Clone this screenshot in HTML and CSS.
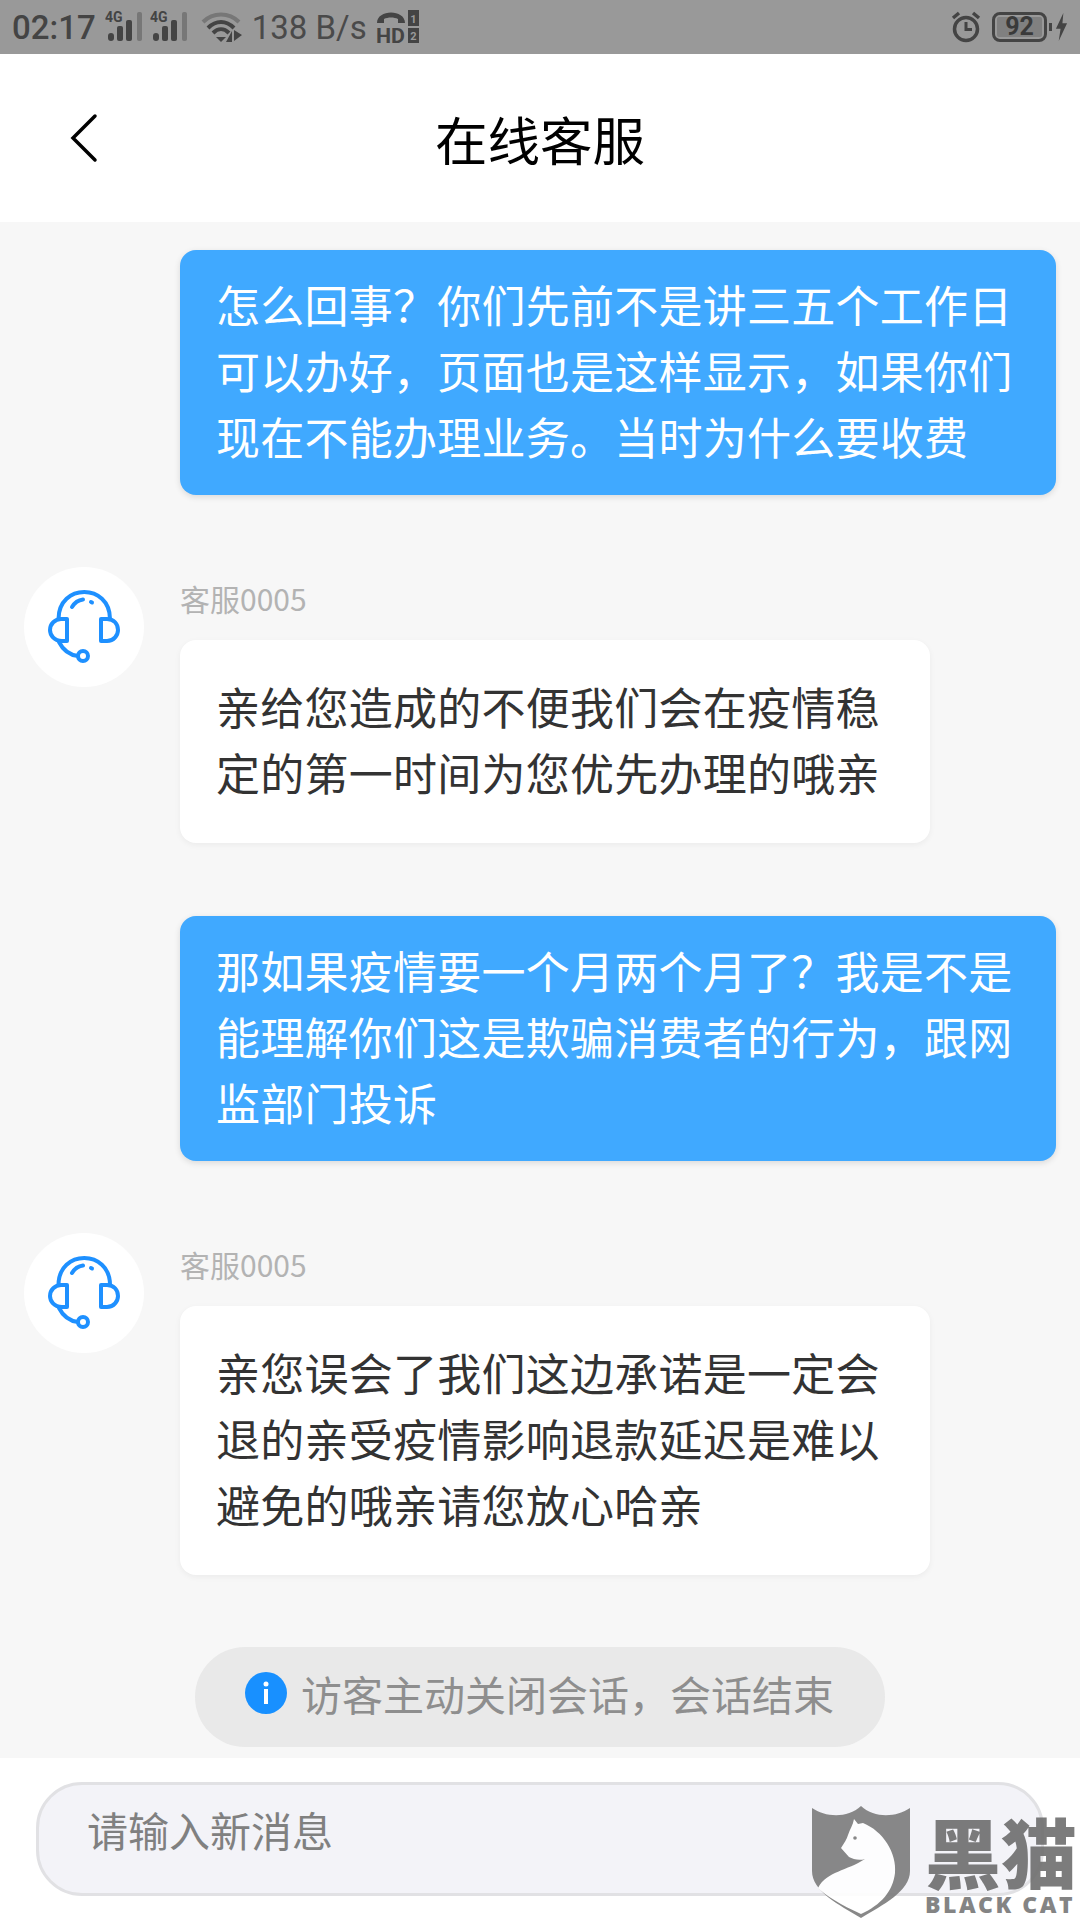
FILE: index.html
```html
<!DOCTYPE html>
<html lang="zh">
<head>
<meta charset="utf-8">
<title>在线客服</title>
<link rel="stylesheet" href="styles.css">
</head>
<body>
<div class="app">
  <div class="status">
    <div class="status-left">
      <span class="time">02:17</span>
      <svg class="ic-sig" viewBox="0 0 40 34"><text x="0" y="12" class="sig-t">4G</text><rect x="3" y="23" width="6" height="8" rx="3" fill="#444"/><rect x="12" y="16" width="6" height="15" rx="2" fill="#444"/><rect x="21" y="10" width="6" height="21" rx="2" fill="#444"/><rect x="32" y="2" width="5" height="29" rx="2" fill="#777"/></svg>
      <svg class="ic-sig" viewBox="0 0 40 34"><text x="0" y="12" class="sig-t">4G</text><rect x="3" y="23" width="6" height="8" rx="3" fill="#444"/><rect x="12" y="16" width="6" height="15" rx="2" fill="#444"/><rect x="21" y="10" width="6" height="21" rx="2" fill="#444"/><rect x="32" y="2" width="5" height="29" rx="2" fill="#777"/></svg>
      <svg class="ic-wifi" viewBox="0 0 44 34"><path d="M2 12 C12 2 28 2 38 12" fill="none" stroke="#777" stroke-width="4"/><path d="M7 18 C15 10 25 10 33 18" fill="none" stroke="#444" stroke-width="4"/><path d="M12 23 C17 18 23 18 28 23" fill="none" stroke="#444" stroke-width="4"/><path d="M15 27 L25 27 L20 32 Z" fill="#444"/><path d="M31 32 V21 L25 32 Z M33 20 V31 L41 25 Z" fill="#444"/></svg>
      <span class="speed">138 B/s</span>
      <svg class="ic-hd" viewBox="0 0 44 40"><path d="M1 13 C1 -1 29 -1 29 13 L22 13 L22 9 C18 7 12 7 8 9 L8 13 Z" fill="#444"/><text x="0" y="33" class="hd-t" textLength="29" lengthAdjust="spacingAndGlyphs">HD</text><rect x="32" y="0" width="11" height="16" fill="#444"/><rect x="32" y="18" width="11" height="15" fill="#444"/><text x="37.500" y="13" class="n-t">1</text><text x="37.500" y="30" class="n-t">2</text></svg>
    </div>
    <div class="status-right">
      <svg class="ic-alarm" viewBox="0 0 30 32"><circle cx="15" cy="18" r="11.500" fill="none" stroke="#444" stroke-width="3.500"/><path d="M15 11 V18.500 H21" fill="none" stroke="#444" stroke-width="3"/><path d="M2 7 L8 2 M28 7 L22 2" stroke="#444" stroke-width="3.500"/></svg>
      <div class="battery"><span class="batt-num">92</span></div>
      <span class="batt-cap"></span>
      <svg class="ic-bolt" viewBox="0 0 14 30"><path d="M9 0 L1 17 H6 L4 30 L13 11 H8 Z" fill="#444"/></svg>
    </div>
  </div>

  <header class="nav">
    <svg class="back" viewBox="0 0 30 50"><path d="M26 3 L4 25 L26 47" fill="none" stroke="#000" stroke-width="3.500" stroke-linecap="round"/></svg>
    <h1 class="title">在线客服</h1>
  </header>

  <main class="chat">
    <div class="bubble mine">怎么回事&#xFF1F;你们先前不是讲三五个工作日可以办好&#xFF0C;页面也是这样显示&#xFF0C;如果你们现在不能办理业务。当时为什么要收费</div>

    <div class="agent-row">
      <div class="avatar">
        <svg class="agent-ic" viewBox="0 0 72 74"><g fill="none" stroke="#1e90ff" stroke-width="4" stroke-linecap="round" stroke-linejoin="round"><path d="M10.500 29 C10.500 -7 62 -7 62 29"/><path d="M24 17 C27 12 31 10 35 9.500"/><path d="M43 12 L44 12.500"/><path d="M19 29 V51 H14 C6 51 2 45 2 40 C2 34 7 29 13 29 Z"/><path d="M53 29 V51 H59 C66 51 70 45 70 40 C70 34 66 29 59 29 Z"/><path d="M11 52 C15 60 22 65 30 66"/><circle cx="35" cy="66" r="5"/></g></svg>
      </div>
      <div class="agent-col">
        <div class="name">客服0005</div>
        <div class="bubble theirs">亲给您造成的不便我们会在疫情稳定的第一时间为您优先办理的哦亲</div>
      </div>
    </div>

    <div class="bubble mine">那如果疫情要一个月两个月了&#xFF1F;我是不是能理解你们这是欺骗消费者的行为&#xFF0C;跟网监部门投诉</div>

    <div class="agent-row">
      <div class="avatar">
        <svg class="agent-ic" viewBox="0 0 72 74"><g fill="none" stroke="#1e90ff" stroke-width="4" stroke-linecap="round" stroke-linejoin="round"><path d="M10.500 29 C10.500 -7 62 -7 62 29"/><path d="M24 17 C27 12 31 10 35 9.500"/><path d="M43 12 L44 12.500"/><path d="M19 29 V51 H14 C6 51 2 45 2 40 C2 34 7 29 13 29 Z"/><path d="M53 29 V51 H59 C66 51 70 45 70 40 C70 34 66 29 59 29 Z"/><path d="M11 52 C15 60 22 65 30 66"/><circle cx="35" cy="66" r="5"/></g></svg>
      </div>
      <div class="agent-col">
        <div class="name">客服0005</div>
        <div class="bubble theirs">亲您误会了我们这边承诺是一定会退的亲受疫情影响退款延迟是难以避免的哦亲请您放心哈亲</div>
      </div>
    </div>

    <div class="notice">
      <svg class="info" viewBox="0 0 42 42"><circle cx="21" cy="21" r="21" fill="#1890ff"/><circle cx="21" cy="12" r="2.500" fill="#fff"/><rect x="19" y="17" width="4" height="15" fill="#fff"/></svg>
      <span>访客主动关闭会话&#xFF0C;会话结束</span>
    </div>
  </main>

  <footer class="composer">
    <div class="input">请输入新消息</div>
  </footer>

  <div class="watermark">
    <svg class="wm-shield" viewBox="0 0 100 114"><path d="M1 3 C14 12 36 14 50 1 C64 14 86 12 99 3 V66 C99 86 72 100 50 113 C28 100 1 86 1 66 Z" fill="#7c7c7c"/><path d="M43 14 L47 19 L52 18 C72 26 86 48 84 68 C82 86 70 100 50 109 C30 100 14 90 7 83 C16 66 36 66 54 54 C48 56 42 54 38 52 L30 43 C33 38 36 34 37 30 C39 24 42 20 43 14 Z" fill="#fff"/><circle cx="44" cy="33" r="1.800" fill="#7c7c7c"/></svg>
    <div class="wm-text">
      <div class="wm-cn">黑猫</div>
      <div class="wm-en">BLACK CAT</div>
    </div>
  </div>
</div>
</body>
</html>
```

FILE: styles.css
```css
* { box-sizing: border-box; }
html, body { margin: 0; padding: 0; }
body { font-family: "Noto Sans CJK SC", "Noto Sans", sans-serif; background: #f7f7f7; }
.app { position: relative; width: 1080px; height: 1920px; display: flex; flex-direction: column; overflow: hidden; background: #f7f7f7; }

.status { height: 54px; background: #999; display: flex; justify-content: space-between; align-items: center; padding: 0 12px; color: #444; font-family: Roboto, sans-serif; }
.status-left { display: flex; align-items: center; }
.status-right { display: flex; align-items: center; }
.time { font-size: 33px; font-weight: 500; margin-right: 9px; }
.speed { font-size: 33px; margin: 0 9px 0 7px; color: #4a4a4a; }
.ic-sig { width: 40px; height: 34px; margin-right: 5px; }
.sig-t { font: 700 14px Roboto, sans-serif; fill: #444; }
.ic-wifi { width: 44px; height: 34px; margin-left: 6px; }
.ic-hd { width: 44px; height: 40px; margin-top: 6px; }
.hd-t { font: 700 20px Roboto, sans-serif; fill: #444; }
.n-t { font: 700 11px Roboto, sans-serif; fill: #999; text-anchor: middle; }
.ic-alarm { width: 30px; height: 32px; margin-right: 11px; }
.battery { width: 55px; height: 30px; border: 3px solid #444; border-radius: 8px; padding: 2px; display: flex; }
.batt-num { flex: 1; background: #808080; border-radius: 2px; font-size: 25px; line-height: 20px; font-weight: 700; text-align: center; color: #3a3a3a; }
.batt-cap { width: 3px; height: 8px; background: #444; margin: 0 3px 0 2px; }
.ic-bolt { width: 13px; height: 30px; }

.nav { height: 168px; background: #fff; position: relative; display: flex; align-items: center; justify-content: center; }
.back { position: absolute; left: 69px; top: 59px; width: 30px; height: 50px; }
.title { margin: 0; font-size: 52.500px; font-weight: 400; color: #000; line-height: 1; }

.chat { flex: 1; display: flex; flex-direction: column; align-items: flex-start; padding-top: 28px; }
.bubble { font-size: 44px; line-height: 66px; border-radius: 16px; letter-spacing: .25px; }
.mine { margin-left: 180px; width: 876px; padding: 21px 40px 26px 36px; background: #40a9ff; color: #fff; box-shadow: 0 2px 6px rgba(0,0,0,.12); }
.theirs { background: #fff; color: #333; width: 750px; padding: 33px 50px 38px 36px; box-shadow: 0 2px 6px rgba(0,0,0,.05); }
.agent-row { display: flex; margin: 72px 0 73px 24px; }
.avatar { width: 120px; height: 120px; border-radius: 50%; background: #fff; display: flex; align-items: center; justify-content: center; }
.agent-ic { width: 72px; height: 74px; }
.agent-col { margin-left: 36px; }
.name { height: 73px; font-size: 30px; line-height: 62px; color: #b3b3b3; }

.notice { align-self: center; margin-top: -1px; width: 690px; height: 100px; border-radius: 50px; background: #e9e9e9; color: #8e8e8e; font-size: 41px; display: flex; align-items: center; padding: 0 0 8px 50px; }
.info { width: 42px; height: 42px; margin-right: 14px; flex: none; }

.composer { height: 162px; background: #fff; padding: 24px 36px; }
.input { height: 114px; border: 3px solid #e1e1e4; border-radius: 46px; background: #f3f3f8; color: #808080; font-size: 41px; line-height: 88px; padding-left: 48px; }

.watermark { position: absolute; left: 811px; top: 1805px; display: flex; opacity: .9; }
.wm-shield { width: 100px; height: 114px; }
.wm-text { margin-left: 14px; width: 155px; }
.wm-cn { font-size: 76px; font-weight: 900; line-height: 76px; color: #6e6e6e; white-space: nowrap; margin-top: 7px; }
.wm-en { font: 800 23px/28px "Open Sans", sans-serif; color: #777; white-space: nowrap; letter-spacing: 2.500px; margin-top: 2px; }
```
